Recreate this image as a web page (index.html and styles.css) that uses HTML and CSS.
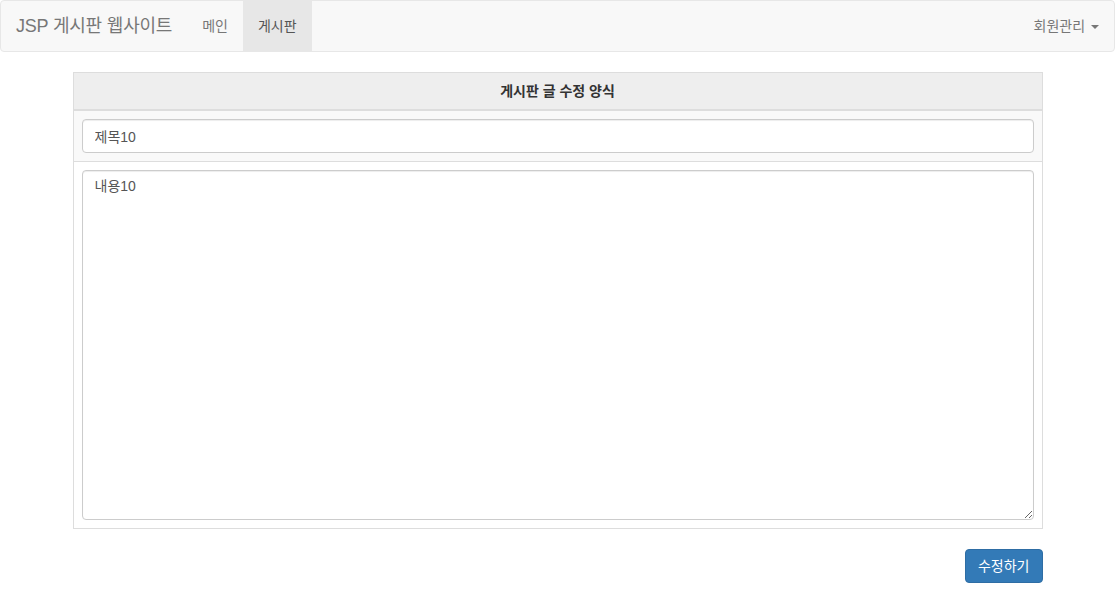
FILE: index.html
```html
<!DOCTYPE html>
<html lang="ko">
<head>
<meta charset="utf-8">
<title>JSP 게시판 웹사이트</title>
<link rel="stylesheet" href="styles.css">
</head>
<body>
<nav class="navbar">
  <div class="navbar-left">
    <a class="brand" href="#">JSP 게시판 웹사이트</a>
    <ul class="nav">
      <li><a href="#">메인</a></li>
      <li class="active"><a href="#">게시판</a></li>
    </ul>
  </div>
  <ul class="nav nav-right">
    <li><a href="#">회원관리 <span class="caret"></span></a></li>
  </ul>
</nav>
<div class="container">
  <form class="edit-form">
    <table class="board">
      <thead>
        <tr><th>게시판 글 수정 양식</th></tr>
      </thead>
      <tbody>
        <tr class="odd"><td><input class="form-control" type="text" value="제목10"></td></tr>
        <tr><td><textarea class="form-control area">내용10</textarea></td></tr>
      </tbody>
    </table>
    <div class="actions">
      <button type="button" class="btn">수정하기</button>
    </div>
  </form>
</div>
</body>
</html>
```
FILE: styles.css
```css
* { box-sizing: border-box; }
html, body { margin: 0; padding: 0; }
body {
  font-family: "Liberation Sans", "Noto Sans CJK KR", Arial, sans-serif;
  font-size: 14px;
  line-height: 1.42857;
  color: #333;
  background: #fff;
}
.navbar {
  display: flex;
  justify-content: space-between;
  height: 52px;
  background: #f8f8f8;
  border: 1px solid #e7e7e7;
  border-radius: 4px;
  margin-bottom: 20px;
}
.navbar-left { display: flex; }
.brand {
  display: block;
  height: 50px;
  padding: 15px;
  font-size: 18px;
  line-height: 20px;
  letter-spacing: -0.2px;
  color: #777;
  text-decoration: none;
}
.nav {
  display: flex;
  list-style: none;
  margin: 0;
  padding: 0;
}
.nav li a {
  display: block;
  padding: 15px;
  line-height: 20px;
  color: #777;
  text-decoration: none;
}
.nav li.active a {
  background: #e7e7e7;
  color: #555;
}
.caret {
  display: inline-block;
  width: 0;
  height: 0;
  margin-left: 2px;
  vertical-align: middle;
  border-top: 4px solid #777;
  border-left: 4px solid transparent;
  border-right: 4px solid transparent;
}
.container {
  width: 970px;
  margin: 0 auto;
}
.board {
  width: 100%;
  border-collapse: collapse;
  border: 1px solid #ddd;
  margin-bottom: 20px;
}
.board th {
  background: #eeeeee;
  text-align: center;
  padding: 8px;
  font-weight: bold;
  border: 1px solid #ddd;
  border-bottom: 2px solid #ddd;
  line-height: 20px;
}
.board td {
  padding: 8px;
  border: 1px solid #ddd;
}
.board tr.odd td { background: #f9f9f9; }
.form-control {
  display: block;
  width: 100%;
  height: 34px;
  padding: 6px 12px;
  font-family: inherit;
  font-size: 14px;
  line-height: 1.42857;
  color: #555;
  background: #fff;
  border: 1px solid #ccc;
  border-radius: 4px;
  box-shadow: inset 0 1px 1px rgba(0,0,0,.075);
  margin: 0;
}
.area {
  height: 350px;
  resize: vertical;
}
.actions {
  display: flex;
  justify-content: flex-end;
}
.btn {
  height: 34px;
  padding: 6px 12px;
  font-family: inherit;
  font-size: 14px;
  line-height: 20px;
  color: #fff;
  background: #337ab7;
  border: 1px solid #2e6da4;
  border-radius: 4px;
}
```
